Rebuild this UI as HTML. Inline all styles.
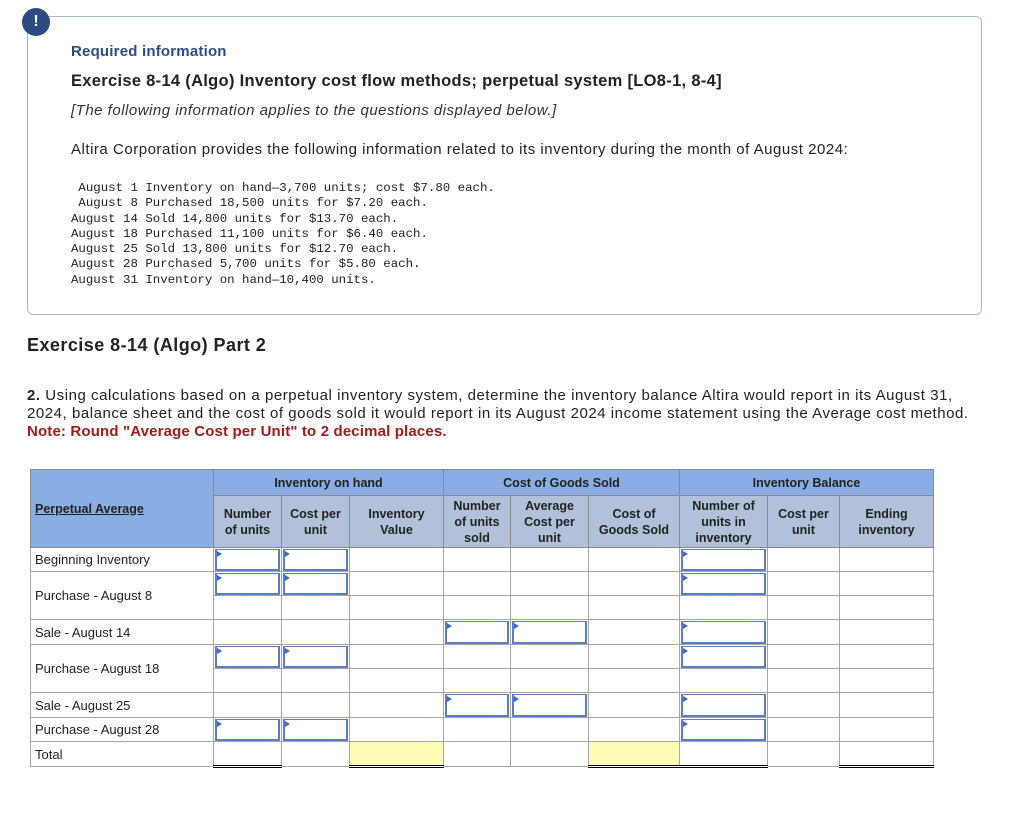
<!DOCTYPE html>
<html><head><meta charset="utf-8"><style>
body{margin:0;width:1024px;height:821px;background:#fff;font-family:"Liberation Sans",sans-serif;color:#222;position:relative;overflow:hidden}
.a{position:absolute;white-space:nowrap}
.box{position:absolute;left:27px;top:16px;width:953px;height:297px;border:1px solid #a9b7cf;border-radius:0 6px 6px 6px}
.ic{position:absolute;left:22px;top:8px;width:28px;height:28px;border-radius:50%;background:#2a4a80;color:#fff;font-weight:bold;font-size:16px;text-align:center;line-height:28px}
pre{position:absolute;left:71px;top:181px;margin:0;font-family:"Liberation Mono",monospace;font-size:12.4px;line-height:15.25px;color:#222}
table{position:absolute;left:30px;top:469px;border-collapse:collapse;table-layout:fixed;font-size:12.5px}
td{border:1px solid #a6a6a6;padding:0;height:23px;position:relative}
.h1{background:#8aaee3;font-weight:bold;text-align:center;height:25px;border-color:#8a8a8a}
.h2{background:#b3c0da;font-weight:bold;text-align:center;line-height:16px;height:51px;border-color:#8a8a8a}
.lab{padding-left:4px;font-size:13px}
.in{position:absolute;left:1px;top:1px;right:1px;bottom:0;border:2px solid #6a8ad0;border-width:1px 2px 2px 2px;border-color:#5a7dc8}
.in:before{content:"";position:absolute;left:0;top:1px;border-left:5px solid #3a6ad0;border-top:3px solid transparent;border-bottom:3px solid transparent}
.y{background:#fffcb3}
.dbl{border-bottom:3px double #000}
</style></head><body>
<div class="box"></div>
<div class="ic">!</div>
<div class="a" style="left:71px;top:43px;font-size:15px;font-weight:bold;color:#2b4c86;letter-spacing:0.2px">Required information</div>
<div class="a" style="left:71px;top:72px;font-size:16.5px;font-weight:bold;color:#222;letter-spacing:0.3px">Exercise 8-14 (Algo) Inventory cost flow methods; perpetual system [LO8-1, 8-4]</div>
<div class="a" style="left:71px;top:102px;font-size:15px;font-style:italic;color:#333;letter-spacing:0.5px">[The following information applies to the questions displayed below.]</div>
<div class="a" style="left:71px;top:141px;font-size:15px;color:#222;letter-spacing:0.52px">Altira Corporation provides the following information related to its inventory during the month of August 2024:</div>
<pre> August 1 Inventory on hand—3,700 units; cost $7.80 each.
 August 8 Purchased 18,500 units for $7.20 each.
August 14 Sold 14,800 units for $13.70 each.
August 18 Purchased 11,100 units for $6.40 each.
August 25 Sold 13,800 units for $12.70 each.
August 28 Purchased 5,700 units for $5.80 each.
August 31 Inventory on hand—10,400 units.</pre>
<div class="a" style="left:27px;top:335px;font-size:18px;font-weight:bold;color:#222;letter-spacing:0.45px">Exercise 8-14 (Algo) Part 2</div>
<div class="a" style="left:27px;top:387px;font-size:15px;line-height:18px;color:#222;letter-spacing:0.54px"><b>2.</b> Using calculations based on a perpetual inventory system, determine the inventory balance Altira would report in its August 31,<br>2024, balance sheet and the cost of goods sold it would report in its August 2024 income statement using the Average cost method.<br><b style="color:#a3191e;letter-spacing:0.15px">Note: Round "Average Cost per Unit" to 2 decimal places.</b></div>
<table>
<colgroup><col style="width:183px"><col style="width:68px"><col style="width:68px"><col style="width:94px"><col style="width:67px"><col style="width:78px"><col style="width:91px"><col style="width:88px"><col style="width:72px"><col style="width:94px"></colgroup>
<tr><td class="h1" rowspan="2" style="text-align:left;padding-left:4px;vertical-align:middle"><u>Perpetual Average</u></td><td class="h1" colspan="3">Inventory on hand</td><td class="h1" colspan="3">Cost of Goods Sold</td><td class="h1" colspan="3">Inventory Balance</td></tr>
<tr><td class="h2">Number<br>of units</td><td class="h2">Cost per<br>unit</td><td class="h2">Inventory<br>Value</td><td class="h2">Number<br>of units<br>sold</td><td class="h2">Average<br>Cost per<br>unit</td><td class="h2">Cost of<br>Goods Sold</td><td class="h2">Number of<br>units in<br>inventory</td><td class="h2">Cost per<br>unit</td><td class="h2">Ending<br>inventory</td></tr>
<tr><td class="lab">Beginning Inventory</td><td><div class="in"></div></td><td><div class="in"></div></td><td></td><td></td><td></td><td></td><td><div class="in"></div></td><td></td><td></td></tr>
<tr><td class="lab" rowspan="2">Purchase - August 8</td><td><div class="in"></div></td><td><div class="in"></div></td><td></td><td></td><td></td><td></td><td><div class="in"></div></td><td></td><td></td></tr>
<tr><td></td><td></td><td></td><td></td><td></td><td></td><td></td><td></td><td></td></tr>
<tr><td class="lab" style="height:24px">Sale - August 14</td><td></td><td></td><td></td><td><div class="in"></div></td><td><div class="in"></div></td><td></td><td><div class="in"></div></td><td></td><td></td></tr>
<tr><td class="lab" rowspan="2">Purchase - August 18</td><td><div class="in"></div></td><td><div class="in"></div></td><td></td><td></td><td></td><td></td><td><div class="in"></div></td><td></td><td></td></tr>
<tr><td></td><td></td><td></td><td></td><td></td><td></td><td></td><td></td><td></td></tr>
<tr><td class="lab" style="height:24px">Sale - August 25</td><td></td><td></td><td></td><td><div class="in"></div></td><td><div class="in"></div></td><td></td><td><div class="in"></div></td><td></td><td></td></tr>
<tr><td class="lab">Purchase - August 28</td><td><div class="in"></div></td><td><div class="in"></div></td><td></td><td></td><td></td><td></td><td><div class="in"></div></td><td></td><td></td></tr>
<tr><td class="lab" style="height:24px">Total</td><td class="dbl"></td><td></td><td class="y dbl"></td><td></td><td></td><td class="y dbl"></td><td class="dbl"></td><td></td><td class="dbl"></td></tr>
</table>
</body></html>
